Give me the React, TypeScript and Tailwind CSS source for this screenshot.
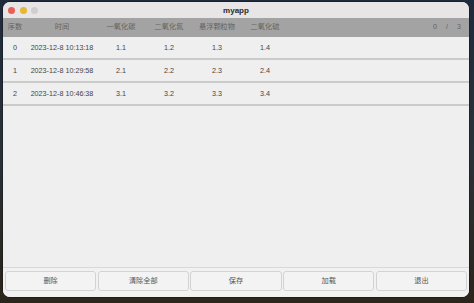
import React from "react";

const rows = [
  ["0", "2023-12-8 10:13:18", "1.1", "1.2", "1.3", "1.4"],
  ["1", "2023-12-8 10:29:58", "2.1", "2.2", "2.3", "2.4"],
  ["2", "2023-12-8 10:46:38", "3.1", "3.2", "3.3", "3.4"],
];

const headers = ["序数", "时间", "一氧化碳", "二氧化氮", "悬浮颗粒物", "二氧化硫"];
const widths = ["w-[24px]", "w-[70px]", "w-[48px]", "w-[48px]", "w-[48px]", "w-[48px]"];

const buttons = ["删除", "清除全部", "保存", "加载", "退出"];

export default function App() {
  return (
    <div
      className="w-[474px] h-[303px] overflow-hidden bg-gradient-to-b from-[#1f2b3c] via-[#2a3138] to-[#2b251b] pl-[3px] pt-[2px]"
      style={{ fontFamily: '"Liberation Sans", "Noto Sans CJK SC", sans-serif' }}
    >
      <div className="w-[466px] h-[295px] rounded-[7px] overflow-hidden flex flex-col bg-[#efefef] shadow-[0_0_0_0.5px_rgba(0,0,0,0.5)]">
        {/* title bar */}
        <div className="h-[16px] bg-[#e7e5e5] flex items-center relative shrink-0">
          <div className="flex items-center gap-[4.5px] pl-[5px] pt-[1px]">
            <span className="w-[7px] h-[7px] rounded-full bg-[#ec5f57]" />
            <span className="w-[7px] h-[7px] rounded-full bg-[#e7b634]" />
            <span className="w-[7px] h-[7px] rounded-full bg-[#cfcfcf]" />
          </div>
          <div className="absolute inset-0 flex items-center justify-center pt-[1px] text-[8px] font-bold text-[#2a2a2a]">
            myapp
          </div>
        </div>
        {/* header */}
        <div className="h-[19px] bg-[#a3a3a3] flex items-center text-[7.2px] text-[#636363] shrink-0">
          {headers.map((h, i) => (
            <div key={i} className={`${widths[i]} text-center`}>
              {h}
            </div>
          ))}
          <div className="flex-1 flex justify-end items-center gap-[9px] pr-[8px]">
            <span>0</span>
            <span>/</span>
            <span>3</span>
          </div>
        </div>
        {/* rows */}
        {rows.map((r, ri) => (
          <div
            key={ri}
            className="h-[23px] border-b-2 border-[#cbcbcb] bg-[#efefef] flex items-center pt-[1px] text-[7.2px] text-[#444] shrink-0"
          >
            {r.map((c, ci) => (
              <div key={ci} className={`${widths[ci]} text-center`}>
                {c}
              </div>
            ))}
          </div>
        ))}
        <div className="flex-1" />
        {/* buttons */}
        <div className="border-t border-[#d8d8d8] bg-[#f1f1f1] h-[30px] flex gap-[1.5px] px-[2px] pt-[3px] pb-[6px] shrink-0">
          {buttons.map((b) => (
            <div
              key={b}
              className="flex-1 rounded-[3px] border border-[#d3d3d3] bg-[#f3f3f3] flex items-center justify-center text-[7.2px] text-[#555]"
            >
              {b}
            </div>
          ))}
        </div>
      </div>
    </div>
  );
}
